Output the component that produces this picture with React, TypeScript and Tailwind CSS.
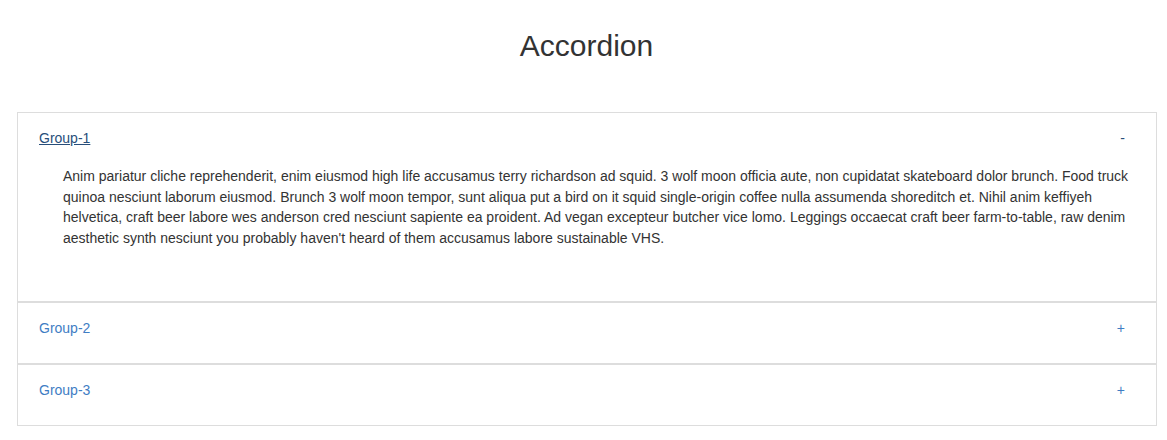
const groups = [
  {
    title: "Group-1",
    open: true,
    body: "Anim pariatur cliche reprehenderit, enim eiusmod high life accusamus terry richardson ad squid. 3 wolf moon officia aute, non cupidatat skateboard dolor brunch. Food truck quinoa nesciunt laborum eiusmod. Brunch 3 wolf moon tempor, sunt aliqua put a bird on it squid single-origin coffee nulla assumenda shoreditch et. Nihil anim keffiyeh helvetica, craft beer labore wes anderson cred nesciunt sapiente ea proident. Ad vegan excepteur butcher vice lomo. Leggings occaecat craft beer farm-to-table, raw denim aesthetic synth nesciunt you probably haven't heard of them accusamus labore sustainable VHS.",
  },
  { title: "Group-2", open: false, body: "" },
  { title: "Group-3", open: false, body: "" },
];

export default function App() {
  return (
    <div className="min-h-[440px] bg-white pt-[29px] font-['Liberation_Sans',Arial,sans-serif] text-[14px] text-[#333]">
      <h1 className="h-[33px] pl-[6px] text-center text-[30px] leading-[33px] font-normal text-[#333]">
        Accordion
      </h1>

      <div className="ml-[17px] mt-[50px] w-[1140px]">
        {groups.map((g) => (
          <div key={g.title} className="border border-[#ddd] pb-[15px]">
            <div className="flex items-center justify-between pl-[21px] pr-[31px] pt-[15px] pb-[10px] leading-5">
              <a
                href="#"
                className={
                  g.open
                    ? "text-[#284e7a] underline"
                    : "text-[#3f7dc4] no-underline"
                }
              >
                {g.title}
              </a>
              <span className={g.open ? "text-[#284e7a]" : "text-[#3f7dc4]"}>
                {g.open ? "-" : "+"}
              </span>
            </div>
            {g.open && (
              <div className="pl-[45px] pr-[12px] pt-[8px] pb-[38px] leading-[20.6px] text-[#333]">
                {g.body}
              </div>
            )}
          </div>
        ))}
      </div>
    </div>
  );
}
